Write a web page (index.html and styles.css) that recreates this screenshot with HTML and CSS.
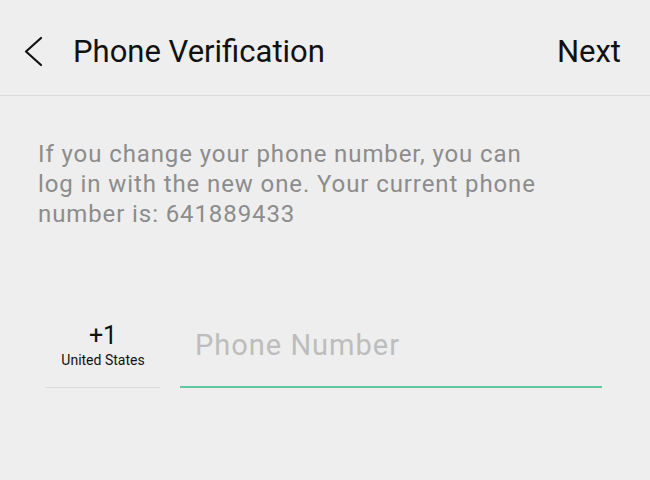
FILE: index.html
```html
<!DOCTYPE html>
<html lang="en">
<head>
    <meta charset="UTF-8">
    <meta name="viewport" content="width=device-width, initial-scale=1.0">
    <title>Phone Verification</title>
    <link rel="stylesheet" href="styles.css">
</head>
<body>
    <header class="top-bar">
        <button class="back-button" aria-label="Back">
            <svg width="20" height="31" viewBox="0 0 20 31">
                <polyline points="18,2 3,15.5 18,29" fill="none" stroke="#111" stroke-width="2.2" stroke-linecap="round" stroke-linejoin="round"/>
            </svg>
        </button>
        <h1 class="title">Phone Verification</h1>
        <a class="next-link" href="#">Next</a>
    </header>

    <main class="content">
        <p class="hint">If you change your phone number, you can log in with the new one. Your current phone number is: 641889433</p>

        <div class="phone-row">
            <div class="country">
                <span class="country-code">+1</span>
                <span class="country-name">United States</span>
            </div>
            <div class="phone-field">
                <input type="tel" placeholder="Phone Number">
            </div>
        </div>
    </main>
</body>
</html>
```

FILE: styles.css
```css
body {
    font-family: 'Roboto', 'Liberation Sans', sans-serif;
    margin: 0;
    padding: 0;
    background-color: #eeeeee;
    color: #111;
    width: 650px;
    height: 480px;
    overflow: hidden;
}

.top-bar {
    display: flex;
    align-items: center;
    height: 96px;
    padding: 8px 29px 0 23px;
    border-bottom: 1px solid #dcdcdc;
    box-sizing: border-box;
}

.back-button {
    background: none;
    border: none;
    padding: 0;
    width: 20px;
    height: 31px;
    cursor: pointer;
}

.title {
    flex: 1;
    margin: 0 0 0 30px;
    font-size: 31px;
    font-weight: 400;
}

.next-link {
    color: #111;
    font-size: 31px;
    text-decoration: none;
}

.content {
    padding: 43px 38px 0 38px;
}

.hint {
    margin: 0;
    max-width: 500px;
    font-size: 24px;
    line-height: 30px;
    letter-spacing: 0.9px;
    color: #8c8c8c;
}

.phone-row {
    display: flex;
    align-items: flex-end;
    gap: 20px;
    margin-top: 93px;
    padding: 0 10px 0 8px;
}

.country {
    width: 114px;
    display: flex;
    flex-direction: column;
    align-items: center;
    padding-bottom: 17px;
    border-bottom: 1px solid #dadada;
}

.country-code {
    font-size: 25px;
    line-height: 28px;
}

.country-name {
    font-size: 14px;
    line-height: 20px;
}

.phone-field {
    flex: 1;
    border-bottom: 2px solid #5ec99f;
}

.phone-field input {
    width: 100%;
    box-sizing: border-box;
    border: none;
    outline: none;
    background: transparent;
    font-family: inherit;
    font-size: 29px;
    letter-spacing: 1px;
    padding: 0 15px 24px 15px;
    color: #333;
}

.phone-field input::placeholder {
    color: #bdbdbd;
}
```
